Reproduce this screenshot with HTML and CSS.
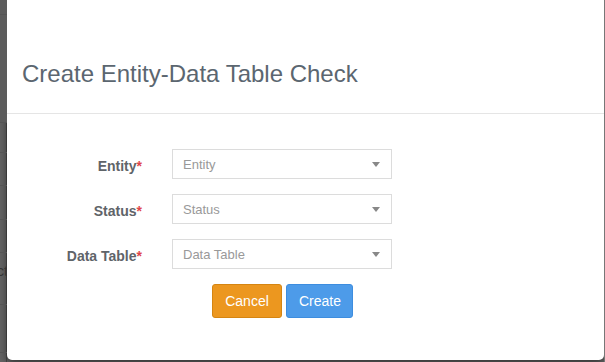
FILE: index.html
```html
<!DOCTYPE html>
<html>
<head>
<meta charset="utf-8">
<link rel="stylesheet" href="styles.css">
</head>
<body>
<div class="screen">
  <div class="backdrop">
    <div class="bd-row h15"></div>
    <div class="bd-row h108 dark"></div>
    <div class="bd-row h30"></div>
    <div class="bd-row h33"></div>
    <div class="bd-row h34"></div>
    <div class="bd-row h33"></div>
    <div class="bd-row h52"><span class="bd-text">ct</span></div>
    <div class="bd-row h48"></div>
    <div class="bd-row"></div>
  </div>
  <div class="modal">
    <div class="modal-header">
      <h4 class="modal-title">Create Entity-Data Table Check</h4>
    </div>
    <div class="modal-body">
      <form class="form">
        <div class="form-row">
          <label class="form-label">Entity<span class="req">*</span></label>
          <div class="select"><span class="placeholder">Entity</span><span class="caret"></span></div>
        </div>
        <div class="form-row">
          <label class="form-label">Status<span class="req">*</span></label>
          <div class="select"><span class="placeholder">Status</span><span class="caret"></span></div>
        </div>
        <div class="form-row">
          <label class="form-label">Data Table<span class="req">*</span></label>
          <div class="select"><span class="placeholder">Data Table</span><span class="caret"></span></div>
        </div>
        <div class="actions">
          <button type="button" class="btn btn-warning">Cancel</button>
          <button type="button" class="btn btn-primary">Create</button>
        </div>
      </form>
    </div>
  </div>
  <div class="edge"></div>
</div>
</body>
</html>
```
FILE: styles.css
```css
* { box-sizing: border-box; }
html, body {
  margin: 0;
  padding: 0;
  width: 605px;
  height: 362px;
  overflow: hidden;
  font-family: "Liberation Sans", Arial, Helvetica, sans-serif;
  background: #666;
}
.screen {
  display: flex;
  height: 362px;
}
.backdrop {
  width: 7px;
  flex: none;
  display: flex;
  flex-direction: column;
  background: #646464;
  overflow: hidden;
  box-shadow: inset -1px 0 0 #4a4a4a;
}
.bd-row {
  border-bottom: 1px solid #555;
  position: relative;
  flex: none;
}
.bd-row:last-child { flex: 1; border-bottom: 0; }
.dark { background: #5c5c5c; }
.h15 { height: 15px; background: #5c5c5c; }
.h108 { height: 108px; }
.h30 { height: 30px; }
.h33 { height: 33px; }
.h34 { height: 34px; }
.h52 { height: 52px; }
.h48 { height: 48px; }
.bd-text {
  position: absolute;
  right: -1px;
  top: 10px;
  font-size: 14px;
  color: #333;
}
.modal {
  flex: 1;
  height: 360px;
  background: #fff;
  border-radius: 0 0 5px 5px;
  box-shadow: 0 3px 9px rgba(0,0,0,0.5);
  display: flex;
  flex-direction: column;
}
.edge {
  width: 1px;
  flex: none;
  background: #777;
}
.modal-header {
  height: 114px;
  border-bottom: 1px solid #e5e5e5;
  padding: 0 15px 25px 15px;
  display: flex;
  align-items: flex-end;
}
.modal-title {
  margin: 0;
  font-size: 24px;
  font-weight: normal;
  color: #5b6670;
  line-height: 28px;
}
.modal-body {
  padding: 35px 0 0 0;
}
.form {
  display: flex;
  flex-direction: column;
  gap: 15px;
}
.form-row {
  display: flex;
  align-items: center;
  height: 30px;
}
.form-label {
  width: 135px;
  text-align: right;
  font-size: 14px;
  font-weight: bold;
  color: #5f6469;
  padding-right: 0;
  margin-top: 3px;
}
.req { color: #e0454a; }
.select {
  margin-left: 30px;
  width: 220px;
  height: 30px;
  border: 1px solid #dcdcdc;
  display: flex;
  align-items: center;
  justify-content: space-between;
  padding: 0 10px 0 10px;
}
.placeholder {
  font-size: 13px;
  color: #999;
}
.caret {
  width: 0;
  height: 0;
  border-left: 4px solid transparent;
  border-right: 4px solid transparent;
  border-top: 5px solid #888;
  margin-right: 1px;
}
.actions {
  display: flex;
  justify-content: flex-start;
  gap: 4px;
  padding-left: 205px;
  margin-top: 0;
}
.btn {
  height: 34px;
  font-family: inherit;
  font-size: 14px;
  color: #fff;
  border-radius: 3px;
  padding: 0 12px;
  border: 1px solid transparent;
}
.btn-warning {
  background: #ec971f;
  border-color: #d58512;
  width: 70px;
}
.btn-primary {
  background: #4d9be9;
  border-color: #3d8ddf;
  width: 67px;
}
```
